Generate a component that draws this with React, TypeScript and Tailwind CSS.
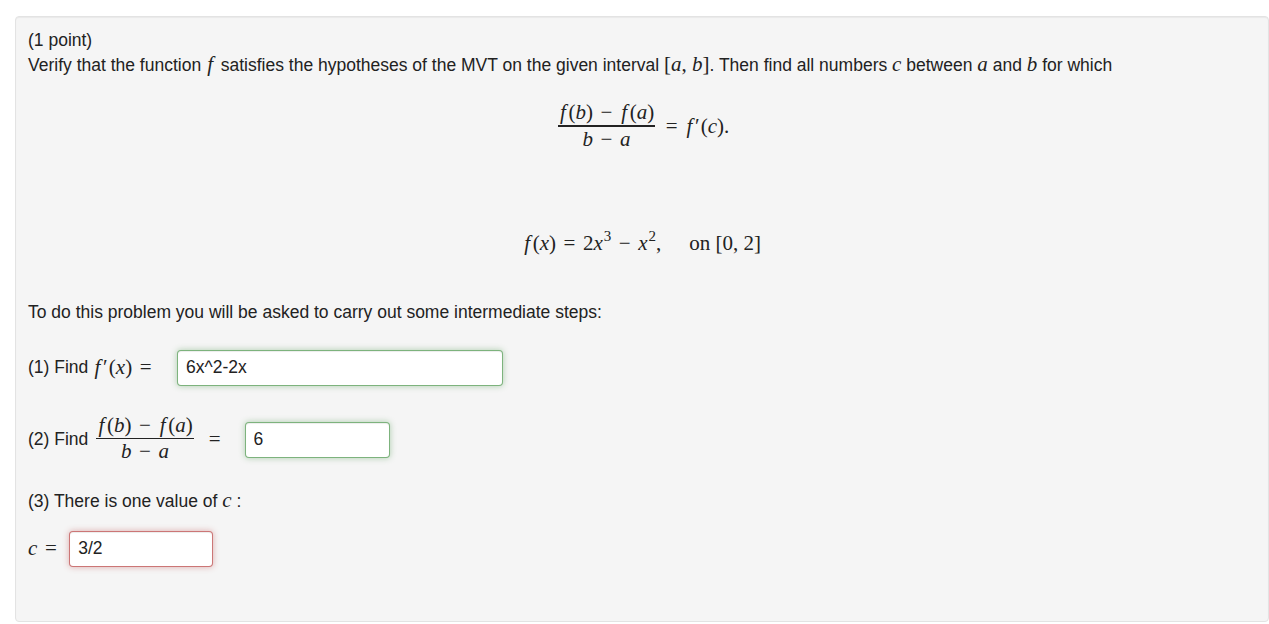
import React from "react";

const M = ({ children, className = "" }: { children: React.ReactNode; className?: string }) => (
  <span className={"font-['Liberation_Serif','Times_New_Roman',serif] whitespace-nowrap text-[#222] " + className}>{children}</span>
);
const I = ({ children }: { children: React.ReactNode }) => <span className="italic">{children}</span>;
const F = () => <span className="italic ml-[0.06em] mr-[0.13em]">f</span>;
const Pr = () => <span className="mr-[0.06em]">′</span>;
const Op = ({ children }: { children: React.ReactNode }) => <span className="mx-[0.36em]">{children}</span>;
const Eq = () => <span className="mx-[0.36em]">=</span>;
const Sup = ({ children }: { children: React.ReactNode }) => (
  <span className="inline-block text-[15px] leading-none relative -top-[9px] ml-[1px]">{children}</span>
);

const Frac = ({ className = "" }: { className?: string }) => (
  <span className={"flex flex-col items-center px-[3px] " + className}>
    <span className="block h-[24px] leading-[22px] px-[1px]">
      <F />(<I>b</I>)<Op>−</Op><F />(<I>a</I>)
    </span>
    <span className="block w-full h-[1.5px] bg-[#222]" />
    <span className="block h-[22px] leading-[24px]">
      <I>b</I>
      <Op>−</Op>
      <I>a</I>
    </span>
  </span>
);

const inputBase =
  "bg-white rounded-[4px] border px-[8px] text-[17.5px] text-[#222] font-['Liberation_Sans',Arial,sans-serif] outline-none";
const okCls =
  " border-[rgba(81,153,81,0.75)] shadow-[inset_0_1px_1px_rgba(0,0,0,0.075),0_0_6px_rgba(81,153,81,0.45)]";
const badCls =
  " border-[rgba(191,84,84,0.8)] shadow-[inset_0_1px_1px_rgba(0,0,0,0.075),0_0_6px_rgba(191,84,84,0.45)]";

export default function App() {
  return (
    <div className="pt-[16px] pl-[15px] bg-white min-h-[624px]">
      <div className="w-[1254px] h-[606px] bg-[#f5f5f5] border border-[#e3e3e3] rounded-[4px] px-[12px] pt-[11px] text-[17.5px] text-[#222] font-['Liberation_Sans',Arial,sans-serif] shadow-[inset_0_1px_1px_rgba(0,0,0,0.05)]">
        <div className="h-[24px] leading-[24px]">(1 point)</div>
        <div className="h-[25px] leading-[25px] whitespace-nowrap">
          Verify that the function{" "}
          <M className="text-[21px]">
            <F />
          </M>{" "}
          satisfies the hypotheses of the MVT on the given interval{" "}
          <M className="text-[21px]">
            [<I>a</I>, <I>b</I>]
          </M>
          . Then find all numbers{" "}
          <M className="text-[21px]">
            <I>c</I>
          </M>{" "}
          between{" "}
          <M className="text-[21px]">
            <I>a</I>
          </M>{" "}
          and{" "}
          <M className="text-[21px]">
            <I>b</I>
          </M>{" "}
          for which
        </div>

        <div className="mt-[24px] flex justify-center items-center text-[21px] font-['Liberation_Serif','Times_New_Roman',serif] text-[#222]">
          <Frac />
          <span className="leading-[22px] whitespace-nowrap mt-[3px]">
            <Eq />
            <F />
            <Pr />(<I>c</I>).
          </span>
        </div>

        <div className="mt-[80px] h-[28px] leading-[28px] flex justify-center text-[21px]">
          <M>
            <F />(<I>x</I>)<Eq />2<I>x</I>
            <Sup>3</Sup>
            <Op>−</Op>
            <I>x</I>
            <Sup>2</Sup>,<span className="inline-block w-[28px]" />
            on [0, 2]
          </M>
        </div>

        <div className="mt-[43px] h-[24px] leading-[24px]">
          To do this problem you will be asked to carry out some intermediate steps:
        </div>

        <div className="mt-[26px] h-[36px] flex items-center">
          <span>(1) Find&nbsp;</span>
          <M className="text-[21px]">
            <F />
            <Pr />(<I>x</I>)<Eq />
          </M>
          <input readOnly value="6x^2-2x" className={inputBase + okCls + " ml-[18px] w-[326px] h-[36px]"} />
        </div>

        <div className="mt-[31px] h-[46px] flex items-center">
          <span>(2) Find&nbsp;</span>
          <span className="flex text-[21px] font-['Liberation_Serif','Times_New_Roman',serif] text-[#222] mb-[4px]">
            <Frac />
          </span>
          <M className="text-[21px] ml-[12px]">=</M>
          <input readOnly value="6" className={inputBase + okCls + " ml-[24px] w-[145px] h-[36px]"} />
        </div>

        <div className="mt-[25px] h-[24px] leading-[24px]">
          (3) There is one value of{" "}
          <M className="text-[21px]">
            <I>c</I>
          </M>{" "}
          :
        </div>

        <div className="mt-[19px] h-[36px] flex items-center">
          <M className="text-[21px]">
            <I>c</I>
            <Eq />
          </M>
          <input readOnly value="3/2" className={inputBase + badCls + " ml-[5px] w-[144px] h-[36px]"} />
        </div>
      </div>
    </div>
  );
}
